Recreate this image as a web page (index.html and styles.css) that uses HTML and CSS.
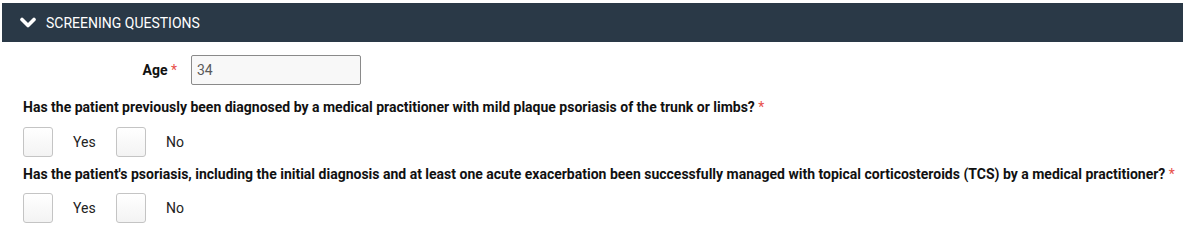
FILE: index.html
```html
<!DOCTYPE html>
<html>
<head>
<meta charset="utf-8">
<link rel="stylesheet" href="styles.css">
</head>
<body>
<div class="panel">
  <div class="panel-header">
    <svg class="chevron" width="16" height="11" viewBox="0 0 16 11"><path d="M2 2.5 L8 8.5 L14 2.5" fill="none" stroke="#fff" stroke-width="3.6" stroke-linecap="round" stroke-linejoin="round"/></svg>
    <span class="panel-title">SCREENING QUESTIONS</span>
  </div>
  <div class="panel-body">
    <div class="age-row">
      <label class="age-label">Age <span class="req">*</span></label>
      <div class="age-input">34</div>
    </div>
    <div class="question q1">Has the patient previously been diagnosed by a medical practitioner with mild plaque psoriasis of the trunk or limbs? <span class="req">*</span></div>
    <div class="options">
      <span class="box"></span><span class="opt">Yes</span>
      <span class="box"></span><span class="opt">No</span>
    </div>
    <div class="question q2">Has the patient's psoriasis, including the initial diagnosis and at least one acute exacerbation been successfully managed with topical corticosteroids (TCS) by a medical practitioner? <span class="req">*</span></div>
    <div class="options">
      <span class="box"></span><span class="opt">Yes</span>
      <span class="box"></span><span class="opt">No</span>
    </div>
  </div>
</div>
</body>
</html>
```
FILE: styles.css
```css
html, body {
  margin: 0;
  padding: 0;
  background: #fff;
  font-family: Roboto, "Liberation Sans", sans-serif;
}
.panel {
  padding: 3px 0 0 2px;
}
.panel-header {
  height: 39px;
  background: #2a3947;
  display: flex;
  align-items: center;
  padding-left: 18px;
}
.chevron {
  display: block;
  margin-right: 10px;
}
.panel-title {
  color: #fff;
  font-size: 14px;
}
.panel-body {
  padding: 13px 0 0 21px;
}
.age-row {
  display: flex;
  align-items: center;
  height: 30px;
}
.age-label {
  width: 154px;
  text-align: right;
  font-weight: bold;
  font-size: 14px;
  color: #111;
  margin-right: 14px;
}
.age-input {
  width: 170px;
  height: 30px;
  box-sizing: border-box;
  border: 1px solid #8a8a8a;
  border-radius: 2px;
  background: #f8f8f8;
  color: #5a5a5a;
  font-size: 14px;
  line-height: 28px;
  padding-left: 5px;
}
.req {
  color: #e8504a;
  font-weight: normal;
}
.question {
  font-weight: bold;
  font-size: 14px;
  color: #111;
  line-height: 16px;
}
.q1 {
  margin-top: 14px;
}
.q2 {
  margin-top: 9px;
}
.options {
  display: flex;
  align-items: center;
  margin-top: 12px;
  height: 30px;
}
.q2 + .options {
  margin-top: 11px;
}
.box {
  width: 28px;
  height: 28px;
  border: 1px solid #c4c4c4;
  border-radius: 3px;
  background: linear-gradient(#ffffff, #f3f3f3);
}
.opt {
  font-size: 14px;
  color: #222;
  margin-left: 20px;
  width: 43px;
}
```
